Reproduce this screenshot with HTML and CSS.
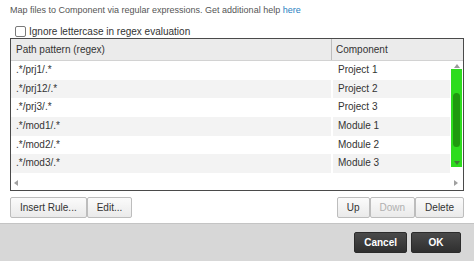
FILE: index.html
```html
<!DOCTYPE html>
<html>
<head>
<meta charset="utf-8">
<link rel="stylesheet" href="styles.css">
</head>
<body>
<div class="dialog">
  <div class="content">
    <p class="intro">Map files to Component via regular expressions. Get additional help <a class="link" href="#">here</a></p>
    <label class="check"><span class="box"></span>Ignore lettercase in regex evaluation</label>
    <div class="table">
      <div class="thead">
        <div class="th c1">Path pattern (regex)</div>
        <div class="th c2">Component</div>
      </div>
      <div class="tbody">
        <div class="rows">
          <div class="row"><div class="td">.*/prj1/.*</div><div class="td">Project 1</div></div>
          <div class="row alt"><div class="td">.*/prj12/.*</div><div class="td">Project 2</div></div>
          <div class="row"><div class="td">.*/prj3/.*</div><div class="td">Project 3</div></div>
          <div class="row alt"><div class="td">.*/mod1/.*</div><div class="td">Module 1</div></div>
          <div class="row"><div class="td">.*/mod2/.*</div><div class="td">Module 2</div></div>
          <div class="row alt"><div class="td">.*/mod3/.*</div><div class="td">Module 3</div></div>
        </div>
        <div class="vscroll">
          <span class="arrow up"></span>
          <div class="track">
            <div class="thumb"></div>
            <span class="arrow down"></span>
          </div>
        </div>
      </div>
      <div class="hscroll">
        <span class="arrow left"></span>
        <span class="arrow right"></span>
      </div>
    </div>
    <div class="actions">
      <div class="group">
        <button class="btn">Insert Rule...</button><button class="btn">Edit...</button>
      </div>
      <div class="group">
        <button class="btn">Up</button><button class="btn disabled">Down</button><button class="btn">Delete</button>
      </div>
    </div>
  </div>
  <div class="footer">
    <button class="btn-dark">Cancel</button>
    <button class="btn-dark">OK</button>
  </div>
</div>
</body>
</html>
```

FILE: styles.css
```css
html, body {
  margin: 0;
  padding: 0;
  background: #ffffff;
}

body {
  font-family: "Liberation Sans", Arial, sans-serif;
  color: #333333;
}

.dialog {
  width: 474px;
  height: 261px;
  display: flex;
  flex-direction: column;
}

.content {
  padding: 4px 10px 5px 10px;
}

.intro {
  margin: 0;
  font-size: 9px;
  line-height: 12px;
  color: #555555;
}

.link {
  color: #2a7fc1;
  text-decoration: none;
}

.check {
  margin-top: 8px;
  height: 14px;
  display: flex;
  align-items: center;
  font-size: 10px;
  color: #333333;
}

.box {
  width: 9px;
  height: 9px;
  border: 1px solid #7a7a7a;
  border-radius: 2px;
  margin-left: 5px;
  margin-right: 3px;
  background: #ffffff;
}

.table {
  border: 1px solid #4a4a4a;
  font-size: 10px;
}

.thead {
  display: flex;
  height: 21px;
  background: #ebebeb;
  border-bottom: 1px solid #d2d2d2;
}

.th {
  line-height: 22px;
  padding-left: 5px;
}

.th.c1 {
  width: 321px;
  box-sizing: border-box;
  border-right: 1px solid #bdbdbd;
}

.th.c2 {
  padding-left: 4px;
}

.tbody {
  display: flex;
  height: 113px;
}

.rows {
  flex: 1;
}

.row {
  display: grid;
  grid-template-columns: 320px 1fr;
  column-gap: 2px;
  height: 18.7px;
}

.td {
  padding-left: 5px;
  line-height: 18.7px;
}

.row.alt .td {
  background: #f3f3f3;
}

.vscroll {
  width: 13px;
  padding-top: 2px;
  box-sizing: border-box;
  display: flex;
  flex-direction: column;
  align-items: center;
}

.arrow {
  width: 0;
  height: 0;
  display: block;
}

.arrow.up {
  border-left: 3px solid transparent;
  border-right: 3px solid transparent;
  border-bottom: 4px solid #9a9a9a;
  margin-top: 1px;
  margin-bottom: 1px;
}

.track {
  width: 11px;
  height: 98px;
  margin-right: 1px;
  margin-left: 1px;
  background: #2edc1e;
  display: flex;
  flex-direction: column;
  align-items: center;
}

.thumb {
  width: 7px;
  height: 54px;
  margin-top: 24px;
  border-radius: 3.5px;
  background: #1f9a0e;
}

.arrow.down {
  margin-top: auto;
  margin-bottom: 2px;
  border-left: 3px solid transparent;
  border-right: 3px solid transparent;
  border-top: 4px solid #3f7f38;
}

.hscroll {
  height: 16px;
  box-sizing: border-box;
  padding: 2px 5px 0 3px;
  display: flex;
  justify-content: space-between;
  align-items: center;
}

.arrow.left {
  border-top: 3px solid transparent;
  border-bottom: 3px solid transparent;
  border-right: 4px solid #a0a0a0;
}

.arrow.right {
  border-top: 3px solid transparent;
  border-bottom: 3px solid transparent;
  border-left: 4px solid #a0a0a0;
}

.actions {
  margin-top: 6px;
  display: flex;
  justify-content: space-between;
}

.group {
  display: flex;
}

.btn {
  height: 21px;
  padding: 0 9px;
  margin: 0;
  border: 1px solid #bdbdbd;
  border-radius: 2px;
  background: linear-gradient(#fbfbfb, #eaeaea);
  font-family: "Liberation Sans", Arial, sans-serif;
  font-size: 10px;
  color: #333333;
}

.btn.disabled {
  color: #b0b0b0;
}

.footer {
  flex: 1;
  background: #d7d7d7;
  border-top: 1px solid #c4c4c4;
  display: flex;
  justify-content: flex-end;
  align-items: flex-start;
  padding: 8px 13px 0 0;
  gap: 4px;
}

.btn-dark {
  height: 21px;
  min-width: 50px;
  padding: 0 9px;
  margin: 0;
  border: 1px solid #2b2b2b;
  border-radius: 2px;
  background: linear-gradient(#4a4a4a, #2f2f2f);
  color: #ffffff;
  font-family: "Liberation Sans", Arial, sans-serif;
  font-weight: bold;
  font-size: 10px;
}
```
